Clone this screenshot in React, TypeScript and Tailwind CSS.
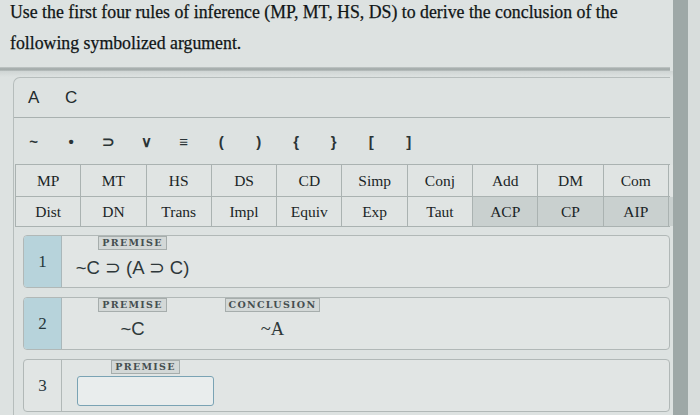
import React from "react";

const serif = { fontFamily: '"Liberation Serif", "Times New Roman", serif' };
const sans = { fontFamily: '"Liberation Sans", Arial, sans-serif' };
const labelFont = { fontFamily: '"DejaVu Serif", serif' };

const rules1 = ["MP", "MT", "HS", "DS", "CD", "Simp", "Conj", "Add", "DM", "Com"];
const rules2 = ["Dist", "DN", "Trans", "Impl", "Equiv", "Exp", "Taut", "ACP", "CP", "AIP"];
const dark = new Set(["ACP", "CP", "AIP"]);
const symbols = ["~", "•", "⊃", "∨", "≡", "(", ")", "{", "}", "[", "]"];

function Label({ text }: { text: string }) {
  return (
    <div
      className="h-[14px] px-[3px] flex items-center justify-center border border-[#a6adac] bg-[#d3d8d7] text-[9.5px] font-bold tracking-[1.3px] text-[#454e50] leading-none"
      style={labelFont}
    >
      {text}
    </div>
  );
}

export default function App() {
  return (
    <div className="w-[700px] h-[415px] overflow-hidden flex bg-[#dde2e1] text-[#263032]">
      <div className="w-[673px] flex flex-col">
        <div className="h-[67px] pl-[10px] pt-0">
          <p className="text-[17.8px] leading-[31px] mt-[-3px] text-[#101516] [-webkit-text-stroke:0.25px_#101516]" style={serif}>
            Use the first four rules of inference (MP, MT, HS, DS) to derive the conclusion of the
            <br />
            following symbolized argument.
          </p>
        </div>
        <div className="h-[4px] mr-[3px] bg-gradient-to-b from-[#c3c9c8] via-[#9fa7a6] to-[#b9c0bf]" />
        <div className="h-[6px] bg-gradient-to-b from-[#cfd5d4] to-[#dde2e1]" />
        <div className="flex-1 ml-[13px] mr-[3px] border-l border-t border-[#b6bdbc] rounded-tl-[7px] flex flex-col">
          <div className="h-[40px] border-b border-[#a9b1b0] flex items-center pl-[1px] pt-[1px]">
            {["A", "C"].map((s) => (
              <div key={s} className="w-[37.5px] text-center text-[17px] text-[#222b2d]" style={sans}>
                {s}
              </div>
            ))}
          </div>
          <div className="h-[46px] flex items-center pl-[1px] pt-[3px]">
            {symbols.map((s, i) => (
              <div key={i} className="w-[37.5px] text-center text-[15px] font-bold text-[#2a3436]" style={sans}>
                {s}
              </div>
            ))}
          </div>
          <div className="ml-[1px] grid grid-cols-[repeat(10,64.3px)_12px] grid-rows-[31px_29px] gap-px bg-[#aab2b1] border border-[#aab2b1] text-[15.5px] text-[#1a2426]" style={serif}>
            {rules1.map((r) => (
              <div key={r} className="bg-[#e0e4e3] flex items-center justify-center">
                {r}
              </div>
            ))}
            <div className="bg-[#e0e4e3]" />
            {rules2.map((r) => (
              <div
                key={r}
                className={`${dark.has(r) ? "bg-[#c9d0cf]" : "bg-[#e0e4e3]"} flex items-center justify-center`}
              >
                {r}
              </div>
            ))}
            <div className="bg-[#c9d0cf]" />
          </div>

          <div className="ml-[9px] mt-[8px] flex flex-col gap-[9px]">
            {/* line 1 */}
            <div className="h-[53px] flex border border-[#b1b8b7] rounded-[4px] overflow-hidden bg-[#e1e5e4]">
              <div className="w-[38px] bg-[#b7d3db] border-r border-[#a9b7ba] flex items-center justify-center text-[17px] text-[#26363c]" style={serif}>
                1
              </div>
              <div className="w-[141px] flex flex-col items-center">
                <Label text="PREMISE" />
                <div className="mt-[8px] text-[18.5px] leading-[20px] text-[#2e383a]" style={sans}>
                  ~C ⊃ (A ⊃ C)
                </div>
              </div>
            </div>
            {/* line 2 */}
            <div className="h-[53px] flex border border-[#b1b8b7] rounded-[4px] overflow-hidden bg-[#e1e5e4]">
              <div className="w-[38px] bg-[#b7d3db] border-r border-[#a9b7ba] flex items-center justify-center text-[17px] text-[#26363c]" style={serif}>
                2
              </div>
              <div className="w-[141px] flex flex-col items-center">
                <Label text="PREMISE" />
                <div className="mt-[7px] text-[18.5px] leading-[20px] text-[#2e383a]" style={sans}>
                  ~C
                </div>
              </div>
              <div className="w-[139px] flex flex-col items-center">
                <Label text="CONCLUSION" />
                <div className="mt-[7px] text-[18.5px] leading-[20px] text-[#2e383a]" style={serif}>
                  ~A
                </div>
              </div>
            </div>
            {/* line 3 */}
            <div className="h-[53px] flex border border-[#b1b8b7] rounded-[4px] overflow-hidden bg-[#e1e5e4]">
              <div className="w-[38px] border-r border-[#b1b8b7] flex items-center justify-center text-[17px] text-[#26363c]" style={serif}>
                3
              </div>
              <div className="w-[167px] flex flex-col items-center">
                <Label text="PREMISE" />
                <div className="mt-[2px] w-[137px] h-[30px] rounded-[3px] border-[1.5px] border-[#7aa3b4] bg-[#e9eded]" />
              </div>
            </div>
          </div>
        </div>
      </div>
      <div className="w-[15px] bg-[#9ea8a7]" />
      <div className="flex-1 bg-[#d8dddc]" />
    </div>
  );
}
